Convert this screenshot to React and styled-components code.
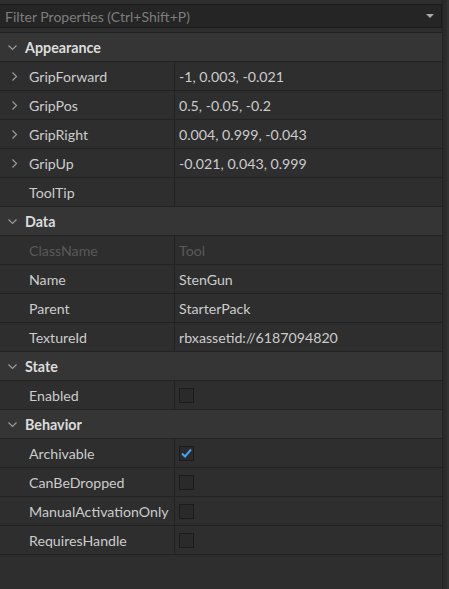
import React from 'react';
import styled, { createGlobalStyle } from 'styled-components';

const Global = createGlobalStyle`
  html, body { margin: 0; padding: 0; background: #2e2e2e; }
  body { font-family: Lato, "Noto Sans", sans-serif; }
`;

const Panel = styled.div`
  width: 449px;
  height: 589px;
  display: flex;
  background: #2e2e2e;
  overflow: hidden;
`;

const Main = styled.div`
  flex: 1;
  display: flex;
  flex-direction: column;
  padding-top: 4px;
  border-right: 1px solid #222;
`;

const Filter = styled.div`
  height: 22px;
  display: flex;
  align-items: center;
  justify-content: space-between;
  background: #252525;
  border: 1px solid #1c1c1c;
  border-left: none;
  padding: 0 7px 0 5px;
  color: #7d7d7d;
  font-size: 14px;
  margin-bottom: 4px;
`;

const Caret = styled.span`
  width: 0;
  height: 0;
  border-left: 4px solid transparent;
  border-right: 4px solid transparent;
  border-top: 4px solid #aaa;
`;

const Table = styled.div`
  display: flex;
  flex-direction: column;
  border-top: 1px solid #222;
`;

const Header = styled.div`
  height: 28px;
  display: flex;
  align-items: center;
  background: #353535;
  border-bottom: 1px solid #222;
  color: #dcdcdc;
  font-weight: 700;
  font-size: 14.3px;
  padding-left: 7px;
  gap: 7px;
`;

const Row = styled.div`
  height: 28px;
  display: grid;
  grid-template-columns: 175px 1fr;
  background: #2e2e2e;
  border-bottom: 1px solid #222;
  font-size: 14.2px;
`;

const NameCell = styled.div`
  display: flex;
  align-items: center;
  border-right: 1px solid #222;
  padding-left: 7px;
  color: ${p => (p.$disabled ? '#595959' : '#cccccc')};
  white-space: nowrap;
  overflow: hidden;
`;

const Arrow = styled.span`
  width: 15px;
  margin-right: 7px;
  display: flex;
  justify-content: center;
`;

const ValueCell = styled.div`
  display: flex;
  align-items: center;
  padding-left: 4px;
  color: ${p => (p.$disabled ? '#595959' : '#cccccc')};
`;

const Box = styled.span`
  width: 13px;
  height: 13px;
  border: 1px solid #1b1b1b;
  background: #2a2a2a;
  display: flex;
  align-items: center;
  justify-content: center;
`;

const Scroll = styled.div`
  width: 6px;
  background: #2b2b2b;
  border-right: 2px solid #333;
  box-sizing: border-box;
`;

const Chevron = ({ down }) => (
  <svg width="11" height="11" viewBox="0 0 11 11">
    <path
      d={down ? 'M1.5 3.5 L5.5 7.5 L9.5 3.5' : 'M3.5 1.5 L7.5 5.5 L3.5 9.5'}
      fill="none"
      stroke="#9a9a9a"
      strokeWidth="1.2"
    />
  </svg>
);

const Check = ({ on }) => (
  <Box>
    {on && (
      <svg width="13" height="12" viewBox="0 0 13 12">
        <path d="M2 6.5 L5 9.5 L11 2.5" fill="none" stroke="#3ea6f5" strokeWidth="2" />
      </svg>
    )}
  </Box>
);

const sections = [
  {
    title: 'Appearance',
    rows: [
      { name: 'GripForward', value: '-1, 0.003, -0.021', expand: true },
      { name: 'GripPos', value: '0.5, -0.05, -0.2', expand: true },
      { name: 'GripRight', value: '0.004, 0.999, -0.043', expand: true },
      { name: 'GripUp', value: '-0.021, 0.043, 0.999', expand: true },
      { name: 'ToolTip', value: '' },
    ],
  },
  {
    title: 'Data',
    rows: [
      { name: 'ClassName', value: 'Tool', disabled: true },
      { name: 'Name', value: 'StenGun' },
      { name: 'Parent', value: 'StarterPack' },
      { name: 'TextureId', value: 'rbxassetid://6187094820' },
    ],
  },
  {
    title: 'State',
    rows: [{ name: 'Enabled', check: false }],
  },
  {
    title: 'Behavior',
    rows: [
      { name: 'Archivable', check: true },
      { name: 'CanBeDropped', check: false },
      { name: 'ManualActivationOnly', check: false },
      { name: 'RequiresHandle', check: false },
    ],
  },
];

export default function App() {
  return (
    <Panel>
      <Global />
      <Main>
        <Filter>
          Filter Properties (Ctrl+Shift+P)
          <Caret />
        </Filter>
        <Table>
          {sections.map(s => (
            <React.Fragment key={s.title}>
              <Header>
                <Chevron down />
                {s.title}
              </Header>
              {s.rows.map(r => (
                <Row key={r.name}>
                  <NameCell $disabled={r.disabled}>
                    <Arrow>{r.expand && <Chevron />}</Arrow>
                    {r.name}
                  </NameCell>
                  <ValueCell $disabled={r.disabled}>
                    {r.check !== undefined ? <Check on={r.check} /> : r.value}
                  </ValueCell>
                </Row>
              ))}
            </React.Fragment>
          ))}
        </Table>
      </Main>
      <Scroll />
    </Panel>
  );
}
